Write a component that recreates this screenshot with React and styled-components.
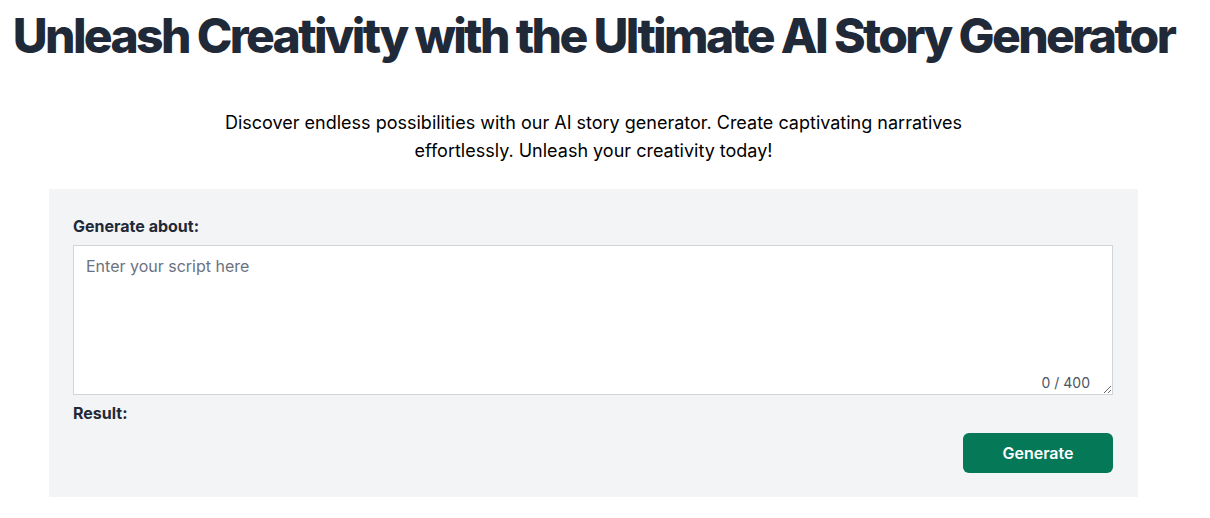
import React, { useState } from 'react';
import styled, { createGlobalStyle } from 'styled-components';

const GlobalStyle = createGlobalStyle`
  * {
    box-sizing: border-box;
  }
  body {
    margin: 0;
    background: #ffffff;
    font-family: Inter, "Noto Sans", "Liberation Sans", sans-serif;
    color: #1f2937;
  }
`;

const Page = styled.main`
  width: 1187px;
  display: flex;
  flex-direction: column;
  align-items: center;
`;

const Title = styled.h1`
  margin: 12px 0 0;
  font-size: 48px;
  line-height: 48px;
  font-weight: 800;
  letter-spacing: -0.055em;
  color: #1f2937;
  white-space: nowrap;
`;

const Lead = styled.p`
  max-width: 768px;
  margin: 49px 0 0;
  font-size: 18px;
  line-height: 28px;
  text-align: center;
  color: #000000;
`;

const Panel = styled.section`
  width: 1089px;
  margin-top: 24px;
  padding: 27px 25px 24px 24px;
  background: #f3f4f6;
  display: flex;
  flex-direction: column;
`;

const Label = styled.label`
  display: block;
  font-size: 16px;
  line-height: 20px;
  font-weight: 700;
  color: #1f2937;
  margin-bottom: ${(p) => p.$gap || 0}px;
`;

const Field = styled.div`
  position: relative;
`;

const TextArea = styled.textarea`
  display: block;
  width: 100%;
  height: 150px;
  padding: 8px 12px;
  border: 1px solid #d1d5db;
  border-radius: 0;
  background: #ffffff;
  font-family: inherit;
  font-size: 16px;
  line-height: 24px;
  color: #111827;
  resize: vertical;
  outline: none;

  &::placeholder {
    color: #6b7280;
  }
`;

const Counter = styled.span`
  position: absolute;
  right: 23px;
  bottom: 2px;
  font-size: 14px;
  line-height: 20px;
  color: #4b5563;
  pointer-events: none;
`;

const Footer = styled.div`
  display: flex;
  flex-direction: column;
  margin-top: 8px;
`;

const Actions = styled.div`
  display: flex;
  justify-content: flex-end;
  margin-top: 10px;
`;

const Button = styled.button`
  width: 150px;
  height: 40px;
  border: none;
  border-radius: 6px;
  background: #047857;
  color: #ffffff;
  font-family: inherit;
  font-size: 16px;
  font-weight: 600;
  cursor: pointer;
`;

const App = () => {
  const [text, setText] = useState('');

  return (
    <>
      <GlobalStyle />
      <Page>
        <Title>Unleash Creativity with the Ultimate AI Story Generator</Title>
        <Lead>
          Discover endless possibilities with our AI story generator. Create captivating
          narratives effortlessly. Unleash your creativity today!
        </Lead>
        <Panel>
          <Label htmlFor="script" $gap={9}>Generate about:</Label>
          <Field>
            <TextArea
              id="script"
              placeholder="Enter your script here"
              maxLength={400}
              value={text}
              onChange={(e) => setText(e.target.value)}
            />
            <Counter>{text.length} / 400</Counter>
          </Field>
          <Footer>
            <Label>Result:</Label>
            <Actions>
              <Button type="button">Generate</Button>
            </Actions>
          </Footer>
        </Panel>
      </Page>
    </>
  );
};

export default App;
